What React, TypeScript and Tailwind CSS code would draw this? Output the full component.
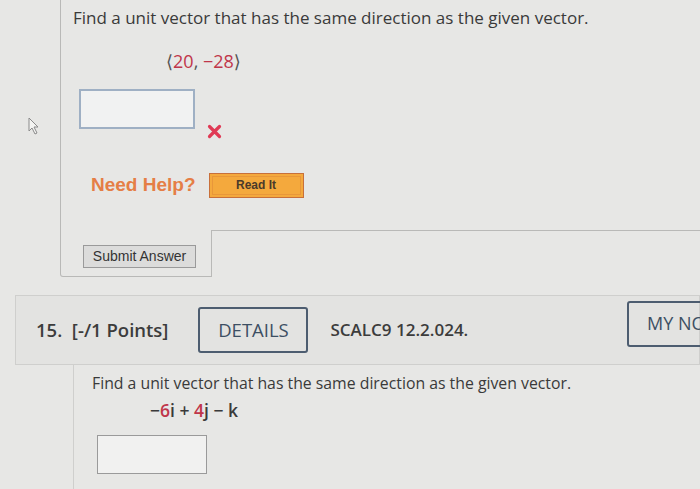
import React from "react";

const sans = { fontFamily: '"Open Sans", "DejaVu Sans", sans-serif' };
const arial = { fontFamily: '"Liberation Sans", Arial, sans-serif' };

function CursorIcon() {
  return (
    <svg width="14" height="18" viewBox="0 0 14 18" className="block">
      <path d="M2 1 L2 14 L5 11 L8 17 L10 16 L7 10 L11 10 Z" fill="#f4f4f2" stroke="#8a8a8a" strokeWidth="1" />
    </svg>
  );
}

export default function App() {
  return (
    <div className="relative h-[489px] w-[700px] overflow-hidden bg-[#e7e7e5] text-[#3f3f3f]" style={sans}>
      {/* cursor in left margin */}
      <div className="absolute left-[27px] top-[117px]">
        <CursorIcon />
      </div>

      {/* previous question */}
      <div className="ml-[60px]">
        <div className="border-l border-[#b9b9b7] pb-[30px] pl-[12px] pt-[6px]">
          <p className="text-[17px] leading-[24px] text-[#3a3a3a]">
            Find a unit vector that has the same direction as the given vector.
          </p>
          <div className="mt-[19px] pl-[93px] text-[18px] leading-[24px] text-[#555]">
            ⟨<span className="text-[#c0364a]">20</span>, <span className="text-[#c0364a]">−28</span>⟩
          </div>
          <div className="mt-[16px] flex items-end gap-[12px] pl-[6px]">
            <div className="h-[40px] w-[116px] border-2 border-[#9fb0c4] bg-[#f1f2f2]" />
            <svg width="15" height="15" viewBox="0 0 15 15" className="mb-[-10px]">
              <path d="M2.5 2.5 L12.5 12.5 M12.5 2.5 L2.5 12.5" stroke="#e03a55" strokeWidth="3.2" strokeLinecap="round" />
            </svg>
          </div>
          <div className="mt-[42px] flex items-center gap-[13px] pl-[18px]" style={arial}>
            <span className="text-[19px] font-bold text-[#e57e45]">Need Help?</span>
            <button className="h-[25px] w-[95px] border border-[#c8703a] bg-[#f4a93d] p-[2px]">
              <span className="flex h-full w-full items-center justify-center border border-[#e8973a] text-[12px] font-bold text-[#4a3a2a]">
                Read It
              </span>
            </button>
          </div>
        </div>
        <div className="flex">
          <div className="h-[47px] w-[152px] rounded-bl-[3px] border-b border-l border-r border-[#b9b9b7] pl-[22px] pt-[13px]">
            <button
              className="h-[23px] w-[113px] border border-[#9a9a9a] bg-[#dcdcdb] text-[14px] leading-[21px] text-[#333]"
              style={arial}
            >
              Submit Answer
            </button>
          </div>
          <div className="flex-1 border-t border-[#b9b9b7]" />
        </div>
      </div>

      {/* question 15 header */}
      <div className="ml-[15px] mt-[18px] flex h-[70px] items-center border border-[#cfcfcd] bg-[#e3e3e1] pl-[20px]">
        <span className="text-[18.5px] font-semibold text-[#3c3c3c]">15.&nbsp;&nbsp;[-/1 Points]</span>
        <div className="ml-[30px] flex h-[46px] w-[110px] items-center justify-center rounded-[3px] border-2 border-[#4d5d70] text-[18.5px] text-[#3d4f63]">
          DETAILS
        </div>
        <span className="ml-[22px] text-[17px] font-semibold text-[#3c3c3c]">SCALC9 12.2.024.</span>
        <div className="ml-auto mr-[-40px] mt-[-12px] flex h-[46px] w-[112px] items-center justify-start rounded-[3px] border-2 border-[#4d5d70] pl-[18px] text-[18px] text-[#3d4f63]">
          MY NOTES
        </div>
      </div>

      {/* question 15 body */}
      <div className="ml-[73px] h-[140px] border-l border-[#cfcfcd] pl-[18px] pt-[7px]">
        <p className="text-[15.8px] leading-[22px] text-[#3a3a3a]">
          Find a unit vector that has the same direction as the given vector.
        </p>
        <div className="mt-[5px] pl-[58px] text-[17.5px] font-semibold leading-[22px] text-[#3a3a3a]">
          −<span className="text-[#c0364a]">6</span>i + <span className="text-[#c0364a]">4</span>j − k
        </div>
        <div className="ml-[5px] mt-[14px] h-[39px] w-[110px] border border-[#9a9a9a] bg-[#f1f1f0]" />
      </div>
    </div>
  );
}
